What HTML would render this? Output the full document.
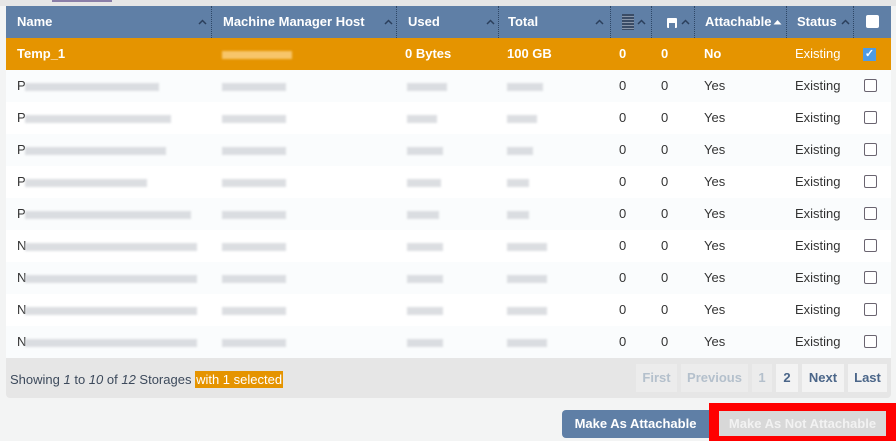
<!DOCTYPE html>
<html><head><meta charset="utf-8"><style>
*{margin:0;padding:0;box-sizing:border-box}
body{width:896px;height:441px;overflow:hidden;background:#f3f4f4;font-family:"Liberation Sans",Arial,sans-serif;font-size:13px;position:relative}
.top{position:absolute;left:0;top:0;width:896px;height:6px;background:#e6e6e6}
.top i{position:absolute;left:52px;top:0;width:60px;height:2px;background:#8a7fa8}
.hdr{position:absolute;left:6px;top:6px;width:885px;height:32px;background:#5f7fa6;color:#fff;font-weight:bold;font-size:13px}
.hc{position:absolute;top:0;height:32px;line-height:31px;border-left:1px dotted #2e4766}
.hc:first-child{border-left:none}
.car{position:absolute;top:13px;width:9px;height:6px}
.row{position:absolute;left:6px;width:885px;height:32px;line-height:32px;color:#333;background:#fff}
.row.alt{background:#fafcfd}
.row.sel{background:#e59400;color:#fff}
.c{position:absolute;top:0}
.b{position:absolute;top:13px;height:8px;background:#d0d3d8;filter:blur(1px);opacity:.75}
.cb{position:absolute;left:858px;top:9px;width:13px;height:13px;border:1px solid #6a6470;border-radius:2px;background:#fff}
.foot{position:absolute;left:6px;top:358px;width:885px;height:40px;background:#e6e6e6;border-radius:0 0 4px 4px}
.pg{position:absolute;top:6px;height:28px;line-height:28px;font-weight:bold;font-size:13px;text-align:center;background:#ececec;color:#b4c0cc}
.pg.on{background:#f3f3f3;color:#4b6689}
</style></head><body>
<svg width="0" height="0" style="position:absolute"><defs><symbol id="up" viewBox="0 0 9 6"><path d="M1 5 L4.5 1.5 L8 5" fill="none" stroke="#2b3f5c" stroke-width="1.5"/></symbol></defs></svg>
<div class="top"><i></i></div>
<div class="hdr">
 <div class="hc" style="left:0;width:205px;padding-left:11px">Name<svg class="car" style="left:192px"><use href="#up"/></svg></div>
 <div class="hc" style="left:205px;width:185px;padding-left:11px">Machine Manager Host<svg class="car" style="left:172px"><use href="#up"/></svg></div>
 <div class="hc" style="left:390px;width:102px;padding-left:11px">Used<svg class="car" style="left:89px"><use href="#up"/></svg></div>
 <div class="hc" style="left:492px;width:112px;padding-left:9px">Total<svg class="car" style="left:96px"><use href="#up"/></svg></div>
 <div class="hc" style="left:604px;width:41px"><span style="position:absolute;left:11px;top:8px;width:12px;height:16px;background:repeating-linear-gradient(#3a4c66 0 2px,#8895a8 2px 3px)"></span><svg class="car" style="left:26px"><use href="#up"/></svg></div>
 <div class="hc" style="left:645px;width:43px"><span style="position:absolute;left:15px;top:12px;width:10px;height:10px;background:#fff;border-radius:1px"><span style="position:absolute;left:2px;top:5px;width:6px;height:5px;background:#5f7fa6"></span></span><svg class="car" style="left:29px"><use href="#up"/></svg></div>
 <div class="hc" style="left:688px;width:92px;padding-left:10px">Attachable<svg class="car" style="left:78px" viewBox="0 0 9 6"><path d="M0.5 5.5 L4.5 1 L8.5 5.5Z" fill="#fff"/></svg></div>
 <div class="hc" style="left:780px;width:67px;padding-left:10px">Status<svg class="car" style="left:54px"><use href="#up"/></svg></div>
 <div class="hc" style="left:847px;width:38px"><span style="position:absolute;left:12px;top:9px;width:13px;height:13px;background:#fff;border-radius:2px"></span></div>
</div>

<div class="row sel" style="top:38px;font-weight:bold">
 <span class="c" style="left:11px">Temp_1</span>
 <span class="b" style="left:216px;width:70px;background:#f7c56a;opacity:1"></span>
 <span class="c" style="left:399px">0 Bytes</span>
 <span class="c" style="left:501px">100 GB</span>
 <span class="c" style="left:613px">0</span><span class="c" style="left:655px">0</span>
 <span class="c" style="left:698px">No</span>
 <span class="c" style="left:789px;font-weight:normal">Existing</span>
 <span style="position:absolute;left:857px;top:10px;width:13px;height:13px;background:#4d9be6;color:#fff;font-size:11px;line-height:13px;text-align:center">&#10003;</span>
</div>

<div class="row alt" style="top:70px"><span class="c" style="left:11px">P</span><span class="b" style="left:19px;width:134px"></span><span class="b" style="left:216px;width:64px"></span><span class="b" style="left:401px;width:40px"></span><span class="b" style="left:501px;width:36px"></span><span class="c" style="left:613px">0</span><span class="c" style="left:655px">0</span><span class="c" style="left:698px">Yes</span><span class="c" style="left:789px">Existing</span><span class="cb"></span></div>
<div class="row" style="top:102px"><span class="c" style="left:11px">P</span><span class="b" style="left:19px;width:146px"></span><span class="b" style="left:216px;width:64px"></span><span class="b" style="left:401px;width:30px"></span><span class="b" style="left:501px;width:30px"></span><span class="c" style="left:613px">0</span><span class="c" style="left:655px">0</span><span class="c" style="left:698px">Yes</span><span class="c" style="left:789px">Existing</span><span class="cb"></span></div>
<div class="row alt" style="top:134px"><span class="c" style="left:11px">P</span><span class="b" style="left:19px;width:141px"></span><span class="b" style="left:216px;width:64px"></span><span class="b" style="left:401px;width:36px"></span><span class="b" style="left:501px;width:26px"></span><span class="c" style="left:613px">0</span><span class="c" style="left:655px">0</span><span class="c" style="left:698px">Yes</span><span class="c" style="left:789px">Existing</span><span class="cb"></span></div>
<div class="row" style="top:166px"><span class="c" style="left:11px">P</span><span class="b" style="left:19px;width:122px"></span><span class="b" style="left:216px;width:64px"></span><span class="b" style="left:401px;width:34px"></span><span class="b" style="left:501px;width:22px"></span><span class="c" style="left:613px">0</span><span class="c" style="left:655px">0</span><span class="c" style="left:698px">Yes</span><span class="c" style="left:789px">Existing</span><span class="cb"></span></div>
<div class="row alt" style="top:198px"><span class="c" style="left:11px">P</span><span class="b" style="left:19px;width:166px"></span><span class="b" style="left:216px;width:64px"></span><span class="b" style="left:401px;width:32px"></span><span class="b" style="left:501px;width:22px"></span><span class="c" style="left:613px">0</span><span class="c" style="left:655px">0</span><span class="c" style="left:698px">Yes</span><span class="c" style="left:789px">Existing</span><span class="cb"></span></div>
<div class="row" style="top:230px"><span class="c" style="left:11px">N</span><span class="b" style="left:19px;width:172px"></span><span class="b" style="left:216px;width:64px"></span><span class="b" style="left:401px;width:36px"></span><span class="b" style="left:501px;width:40px"></span><span class="c" style="left:613px">0</span><span class="c" style="left:655px">0</span><span class="c" style="left:698px">Yes</span><span class="c" style="left:789px">Existing</span><span class="cb"></span></div>
<div class="row alt" style="top:262px"><span class="c" style="left:11px">N</span><span class="b" style="left:19px;width:172px"></span><span class="b" style="left:216px;width:64px"></span><span class="b" style="left:401px;width:36px"></span><span class="b" style="left:501px;width:40px"></span><span class="c" style="left:613px">0</span><span class="c" style="left:655px">0</span><span class="c" style="left:698px">Yes</span><span class="c" style="left:789px">Existing</span><span class="cb"></span></div>
<div class="row" style="top:294px"><span class="c" style="left:11px">N</span><span class="b" style="left:19px;width:172px"></span><span class="b" style="left:216px;width:64px"></span><span class="b" style="left:401px;width:36px"></span><span class="b" style="left:501px;width:40px"></span><span class="c" style="left:613px">0</span><span class="c" style="left:655px">0</span><span class="c" style="left:698px">Yes</span><span class="c" style="left:789px">Existing</span><span class="cb"></span></div>
<div class="row alt" style="top:326px"><span class="c" style="left:11px">N</span><span class="b" style="left:19px;width:172px"></span><span class="b" style="left:216px;width:64px"></span><span class="b" style="left:401px;width:36px"></span><span class="b" style="left:501px;width:40px"></span><span class="c" style="left:613px">0</span><span class="c" style="left:655px">0</span><span class="c" style="left:698px">Yes</span><span class="c" style="left:789px">Existing</span><span class="cb"></span></div>

<div class="foot">
 <div style="position:absolute;left:4px;top:14px;font-size:13px;color:#3d4a5c">Showing <i>1</i> to <i>10</i> of <i>12</i> Storages <span style="background:#e59400;color:#fff;padding:1px 1px">with 1 selected</span></div>
 <div class="pg" style="left:630px;width:41px">First</div>
 <div class="pg" style="left:675px;width:67px">Previous</div>
 <div class="pg" style="left:746px;width:20px">1</div>
 <div class="pg on" style="left:770px;width:22px">2</div>
 <div class="pg on" style="left:796px;width:42px">Next</div>
 <div class="pg on" style="left:842px;width:39px">Last</div>
</div>

<div style="position:absolute;left:562px;top:410px;width:147px;height:28px;background:#5f7fa6;border-radius:4px 0 0 4px;color:#fff;font-weight:bold;font-size:13px;line-height:28px;text-align:center">Make As Attachable</div>
<div style="position:absolute;left:709px;top:403px;width:187px;height:38px;background:#f00"></div>
<div style="position:absolute;left:719px;top:411px;width:167px;height:25px;background:#d8d8d8;color:#f2f2f2;font-weight:bold;font-size:13px;line-height:25px;text-align:center">Make As Not Attachable</div>
</body></html>
